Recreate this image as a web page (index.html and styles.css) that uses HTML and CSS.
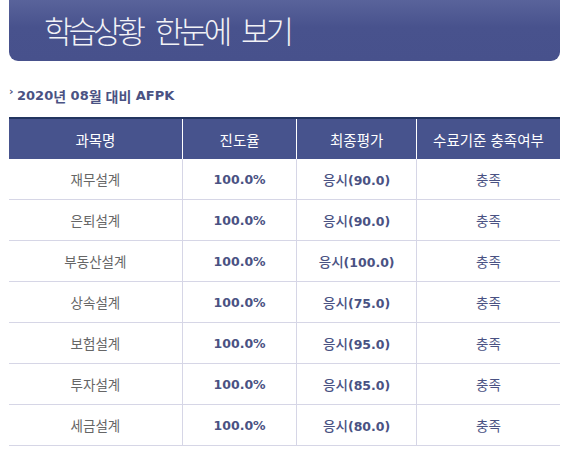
FILE: index.html
```html
<!DOCTYPE html>
<html lang="ko">
<head>
<meta charset="utf-8">
<link rel="stylesheet" href="styles.css">
</head>
<body>
<div class="page">
  <div class="banner"><h1 class="banner-title">학습상황 한눈에 보기</h1></div>
  <h2 class="subtitle"><span class="bullet">›</span>2020<span class="ko">년</span> 08<span class="ko">월 대비</span> AFPK</h2>
  <table class="status">
    <thead>
      <tr><th class="c1">과목명</th><th class="c2">진도율</th><th class="c3">최종평가</th><th class="c4">수료기준 충족여부</th></tr>
    </thead>
    <tbody>
      <tr><td class="name">재무설계</td><td class="num">100.0%</td><td class="num"><span class="ko">응시</span>(90.0)</td><td class="ok">충족</td></tr>
      <tr><td class="name">은퇴설계</td><td class="num">100.0%</td><td class="num"><span class="ko">응시</span>(90.0)</td><td class="ok">충족</td></tr>
      <tr><td class="name">부동산설계</td><td class="num">100.0%</td><td class="num"><span class="ko">응시</span>(100.0)</td><td class="ok">충족</td></tr>
      <tr><td class="name">상속설계</td><td class="num">100.0%</td><td class="num"><span class="ko">응시</span>(75.0)</td><td class="ok">충족</td></tr>
      <tr><td class="name">보험설계</td><td class="num">100.0%</td><td class="num"><span class="ko">응시</span>(95.0)</td><td class="ok">충족</td></tr>
      <tr><td class="name">투자설계</td><td class="num">100.0%</td><td class="num"><span class="ko">응시</span>(85.0)</td><td class="ok">충족</td></tr>
      <tr><td class="name">세금설계</td><td class="num">100.0%</td><td class="num"><span class="ko">응시</span>(80.0)</td><td class="ok">충족</td></tr>
    </tbody>
  </table>
</div>
</body>
</html>
```
FILE: styles.css
```css
html, body { margin: 0; padding: 0; background: #fff; }
body { font-family: "DejaVu Sans", "Noto Sans CJK KR", sans-serif; }
.page { padding: 0 9px; width: 551px; }
.banner {
  height: 61px;
  background: linear-gradient(#59639b, #48528d 45%, #47518c);
  border-radius: 0 0 9px 9px;
  display: flex;
  align-items: center;
  padding-left: 35px;
}
.banner-title {
  margin: 0;
  font-family: "Noto Sans CJK KR", sans-serif;
  font-weight: 300;
  font-size: 31px;
  color: #f2f2f6;
  letter-spacing: -4px;
  word-spacing: 8px;
  line-height: 1;
  padding-bottom: 2px;
}
.subtitle {
  margin: 25px 0 0 0;
  font-size: 13px;
  font-weight: bold;
  color: #4a5283;
  height: 20px;
  line-height: 20px;
  display: flex;
  align-items: flex-start;
  white-space: pre;
}
.subtitle .ko { font-family: "Noto Sans CJK KR", sans-serif; font-size: 14px; }
.bullet {
  font-size: 11px;
  line-height: 11px;
  width: 8px;
  color: #4a5283;
}
.status {
  margin-top: 11px;
  width: 551px;
  border-collapse: collapse;
}
.status th {
  background: #47538d;
  color: #fff;
  font-weight: normal;
  font-size: 14.5px;
  height: 40px;
  border-top: 2px solid #233560;
  border-left: 1px solid #fff;
  padding: 0;
  font-family: "Noto Sans CJK KR", sans-serif;
}
.status th:first-child { border-left: none; }
.c1 { width: 174px; }
.c2 { width: 114px; }
.c3 { width: 119px; }
.c4 { width: 144px; }
.status td {
  height: 40px;
  padding: 0;
  text-align: center;
  border-bottom: 1px solid #d6d6e6;
  border-left: 1px solid #d6d6e6;
}
.status td:first-child { border-left: none; }
.name { color: #666; font-family: "Noto Sans CJK KR", sans-serif; font-size: 13.5px; }
.num { color: #4a5283; font-weight: bold; font-size: 12.5px; }
.num .ko { font-family: "Noto Sans CJK KR", sans-serif; font-size: 13.5px; font-weight: 500; }
.ok { color: #4a5283; font-family: "Noto Sans CJK KR", sans-serif; font-size: 13.5px; }
```
